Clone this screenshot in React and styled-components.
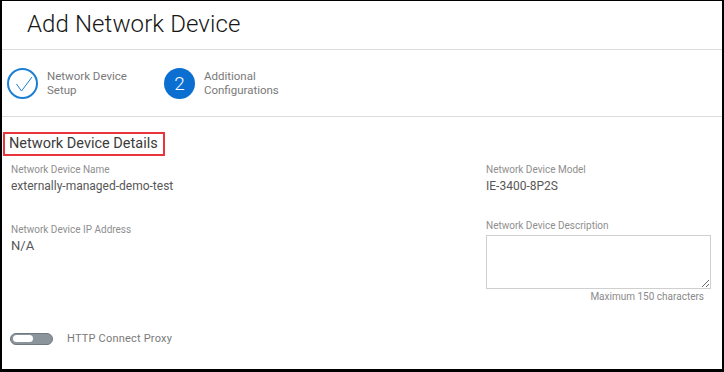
import React from 'react';
import styled, { createGlobalStyle } from 'styled-components';

const GlobalStyle = createGlobalStyle`
  html, body {
    margin: 0;
    padding: 0;
    background: #fff;
  }
  * {
    box-sizing: border-box;
  }
`;

const Frame = styled.div`
  width: 724px;
  height: 372px;
  border-style: solid;
  border-color: #000;
  border-width: 1px 2px 3px 2px;
  background: #fff;
  display: flex;
  flex-direction: column;
  font-family: Roboto, "Liberation Sans", sans-serif;
  overflow: hidden;
`;

const Header = styled.header`
  height: 49px;
  display: flex;
  align-items: center;
  padding: 0 0 2px 25px;
  border-bottom: 1px solid #dcdcdc;
`;

const Title = styled.h1`
  margin: 0;
  font-size: 24px;
  font-weight: 300;
  color: #161616;
  letter-spacing: 0.1px;
`;

const Stepper = styled.nav`
  height: 67px;
  display: flex;
  align-items: center;
  gap: 37px;
  padding-left: 5px;
  border-bottom: 1px solid #dcdcdc;
`;

const Step = styled.div`
  display: flex;
  align-items: center;
  gap: 9px;
`;

const StepBadge = styled.div`
  width: 31px;
  height: 31px;
  border-radius: 50%;
  display: flex;
  align-items: center;
  justify-content: center;
  background: ${(p) => (p.$active ? '#0a6fd0' : '#fff')};
  border: ${(p) => (p.$active ? 'none' : '2.5px solid #1b7fd4')};
  color: #fff;
  font-size: 19px;
  font-weight: 300;
`;

const StepText = styled.div`
  font-size: 11.5px;
  line-height: 14px;
  color: #7a7a7a;
`;

const Body = styled.main`
  flex: 1;
  padding: 15px 12px 0 1px;
  display: flex;
  flex-direction: column;
`;

const SectionTitle = styled.h2`
  align-self: flex-start;
  margin: 0;
  padding: 1px 5px 1px 4px;
  border: 2px solid #e8353c;
  font-size: 14.5px;
  font-weight: 400;
  line-height: 18px;
  color: #3c3c3c;
`;

const Grid = styled.div`
  display: grid;
  grid-template-columns: 1fr 224px;
  column-gap: 12px;
  padding-left: 8px;
  margin-top: 8px;
`;

const Column = styled.div`
  display: flex;
  flex-direction: column;
`;

const Field = styled.div`
  display: flex;
  flex-direction: column;
  margin-bottom: ${(p) => p.$gap || 0}px;
`;

const Label = styled.label`
  font-size: 10px;
  line-height: 12px;
  color: #8f8f8f;
`;

const Value = styled.div`
  margin-top: 2px;
  font-size: ${(p) => p.$size || 12}px;
  line-height: 16px;
  color: #575757;
`;

const TextArea = styled.textarea`
  display: block;
  margin-top: 3px;
  width: 225px;
  height: 54px;
  border: 1px solid #cfcfcf;
  border-radius: 0;
  resize: both;
  font-family: inherit;
  outline: none;
`;

const Helper = styled.div`
  margin-top: 2px;
  text-align: right;
  padding-right: 6px;
  font-size: 10px;
  line-height: 12px;
  color: #8a8a8a;
`;

const ToggleRow = styled.div`
  display: flex;
  align-items: center;
  gap: 14px;
  margin-top: auto;
  margin-bottom: 24px;
  padding-left: 7px;
`;

const Toggle = styled.div`
  width: 43px;
  height: 12px;
  border-radius: 6px;
  background: #8c949b;
  border: 1px solid #717980;
  display: flex;
  align-items: center;
  padding-left: 2px;

  &::before {
    content: '';
    width: 20px;
    height: 7px;
    border-radius: 4px;
    background: #fff;
  }
`;

const ToggleLabel = styled.span`
  font-size: 11px;
  color: #7a7a7a;
  letter-spacing: 0.2px;
`;

const Check = () => (
  <svg width="31" height="31" viewBox="0 0 31 31">
    <polyline points="9.5,17 14.5,24 25,10" fill="none" stroke="#1b7fd4" strokeWidth="1" />
  </svg>
);

const CheckBadge = styled(StepBadge)`
  position: relative;
  svg {
    position: absolute;
    left: -2.5px;
    top: -2.5px;
  }
`;

export default function App() {
  return (
    <>
      <GlobalStyle />
      <Frame>
        <Header>
          <Title>Add Network Device</Title>
        </Header>
        <Stepper>
          <Step>
            <CheckBadge>
              <Check />
            </CheckBadge>
            <StepText>
              Network Device
              <br />
              Setup
            </StepText>
          </Step>
          <Step>
            <StepBadge $active>2</StepBadge>
            <StepText>
              Additional
              <br />
              Configurations
            </StepText>
          </Step>
        </Stepper>
        <Body>
          <SectionTitle>Network Device Details</SectionTitle>
          <Grid>
            <Column>
              <Field $gap={30}>
                <Label>Network Device Name</Label>
                <Value>externally-managed-demo-test</Value>
              </Field>
              <Field>
                <Label>Network Device IP Address</Label>
                <Value $size={13}>N/A</Value>
              </Field>
            </Column>
            <Column>
              <Field $gap={26}>
                <Label>Network Device Model</Label>
                <Value>IE-3400-8P2S</Value>
              </Field>
              <Field>
                <Label>Network Device Description</Label>
                <TextArea />
                <Helper>Maximum 150 characters</Helper>
              </Field>
            </Column>
          </Grid>
          <ToggleRow>
            <Toggle />
            <ToggleLabel>HTTP Connect Proxy</ToggleLabel>
          </ToggleRow>
        </Body>
      </Frame>
    </>
  );
}
